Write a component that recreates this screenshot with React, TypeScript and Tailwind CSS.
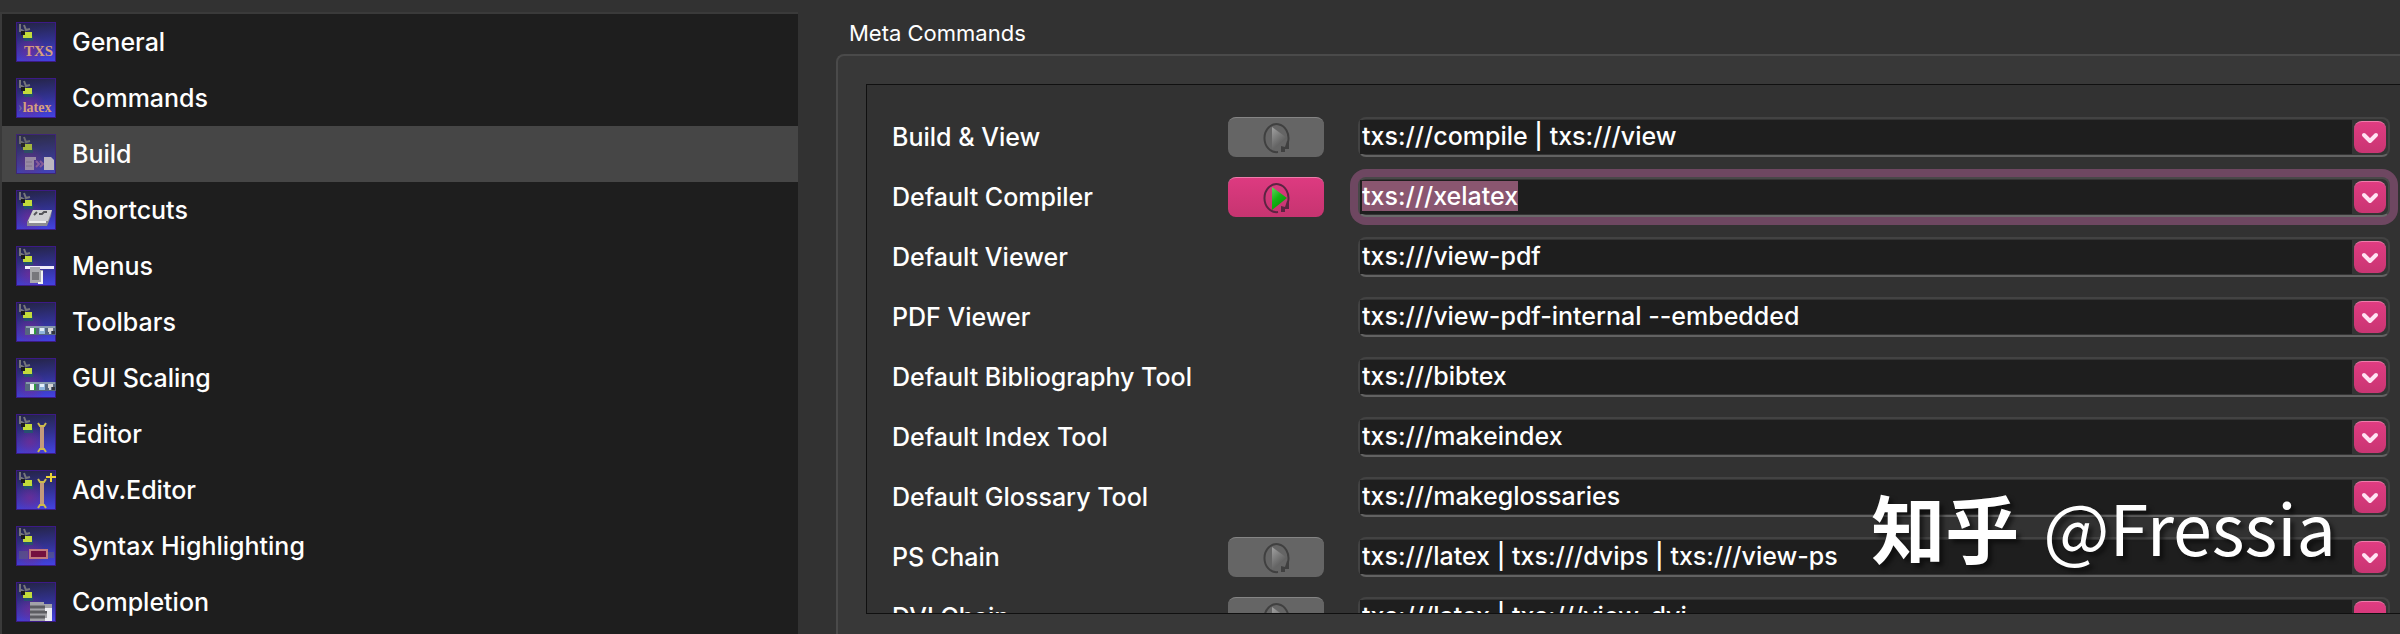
import { useEffect, useRef } from 'react';
import { ChevronDown } from 'lucide-react';

type IconKind =
  | 'general'
  | 'commands'
  | 'build'
  | 'shortcuts'
  | 'menus'
  | 'toolbars'
  | 'editor'
  | 'advEditor'
  | 'syntax'
  | 'completion';

interface Page {
  label: string;
  icon: IconKind;
}

interface Command {
  id: string;
  label: string;
  value: string;
  run?: 'idle' | 'active';
  focused?: boolean;
}

const PAGES: Page[] = [
  { label: 'General', icon: 'general' },
  { label: 'Commands', icon: 'commands' },
  { label: 'Build', icon: 'build' },
  { label: 'Shortcuts', icon: 'shortcuts' },
  { label: 'Menus', icon: 'menus' },
  { label: 'Toolbars', icon: 'toolbars' },
  { label: 'GUI Scaling', icon: 'toolbars' },
  { label: 'Editor', icon: 'editor' },
  { label: 'Adv.Editor', icon: 'advEditor' },
  { label: 'Syntax Highlighting', icon: 'syntax' },
  { label: 'Completion', icon: 'completion' },
];

const COMMANDS: Command[] = [
  { id: 'quick', label: 'Build & View', value: 'txs:///compile | txs:///view', run: 'idle' },
  { id: 'compile', label: 'Default Compiler', value: 'txs:///xelatex', run: 'active', focused: true },
  { id: 'view', label: 'Default Viewer', value: 'txs:///view-pdf' },
  { id: 'view-pdf', label: 'PDF Viewer', value: 'txs:///view-pdf-internal --embedded' },
  { id: 'bibliography', label: 'Default Bibliography Tool', value: 'txs:///bibtex' },
  { id: 'index', label: 'Default Index Tool', value: 'txs:///makeindex' },
  { id: 'glossary', label: 'Default Glossary Tool', value: 'txs:///makeglossaries' },
  { id: 'ps-chain', label: 'PS Chain', value: 'txs:///latex | txs:///dvips | txs:///view-ps', run: 'idle' },
  { id: 'dvi-chain', label: 'DVI Chain', value: 'txs:///latex | txs:///view-dvi', run: 'idle' },
];

function IconDetail({ kind }: { kind: IconKind }) {
  switch (kind) {
    case 'general':
      return (
        <text x="8" y="34" fontSize="15" fontWeight="bold" fontFamily="Liberation Serif, serif" fill="#d6a07c">
          TXS
        </text>
      );
    case 'commands':
      return (
        <text x="2" y="34" fontSize="14" fontWeight="bold" fontFamily="Liberation Serif, serif" fill="#d6a07c">
          <tspan fill="#6a6aa0">›</tspan>latex
        </text>
      );
    case 'build':
      return (
        <>
          <path d="M9 23h11v3h-2v10H9z" fill="#b5a3c4" />
          <path d="M10 28h6M10 32h6" stroke="#93809f" strokeWidth="1" />
          <path d="M20 27l3 3-3 3M24 27l3 3-3 3" stroke="#9d62b4" strokeWidth="2" fill="none" />
          <path d="M28 23h7l3 3v10H28z" fill="#e4dcea" />
        </>
      );
    case 'shortcuts':
      return (
        <>
          <path d="M17 20h19l-1 6-4 10H11v-4z" fill="#8c8c92" />
          <path d="M17 20h19l-4 11H12z" fill="#cfcfd2" />
          <path d="M18 25l3-3M23 24h3l2-2h3" stroke="#55555a" strokeWidth="2" fill="none" />
          <path d="M13 32h17" stroke="#f0f0f0" strokeWidth="2" />
        </>
      );
    case 'menus':
      return (
        <>
          <rect x="9" y="20" width="29" height="3" fill="#f0ecfa" />
          <rect x="14" y="21" width="10" height="3" fill="#aaaab2" />
          <rect x="14" y="24" width="13" height="13" fill="#a9a9ae" />
          <rect x="16" y="26" width="7" height="8" fill="#77777c" />
          <path d="M26 25v12h-4" stroke="#f2f2f2" strokeWidth="2" fill="none" />
        </>
      );
    case 'toolbars':
      return (
        <>
          <rect x="9" y="24" width="31" height="9" fill="#56667f" />
          <path d="M10 24h29v2H10z" fill="#8799ad" />
          <path d="M14 26h4v6h-4z" fill="#f4f4fa" />
          <path d="M18 26h2v6h-2z" fill="#2e9a3e" />
          <rect x="23" y="26" width="6" height="6" fill="#8fb4dc" />
          <rect x="24" y="26" width="4" height="3" fill="#e2edf8" />
          <path d="M32 26h5v3h-2v3h-2v-2h-1z" fill="#d5d5d5" />
          <path d="M36 29h3v3h-3z" fill="#33343c" />
        </>
      );
    case 'editor':
    case 'advEditor':
      return (
        <>
          <path d="M24 12h4v24h-4z" fill="#c39a7c" />
          <path d="M22 9l2 3h4l2-3M22 38l2-3h4l2 3" stroke="#cdbb4c" strokeWidth="2" fill="none" />
          {kind === 'advEditor' && <path d="M35 3v9M30 7h10" stroke="#ecd436" strokeWidth="2" />}
        </>
      );
    case 'syntax':
      return (
        <>
          <path d="M3 25h9v8H3zM32 26h6v6h-6z" fill="#5c5c80" opacity="0.6" />
          <rect x="14" y="24" width="17" height="8" fill="#74103f" stroke="#c0787c" strokeWidth="2" />
        </>
      );
    case 'completion':
      return (
        <>
          <path d="M14 20h14v2h8v17H14z" fill="#a2a2a8" />
          <path d="M14 25h15M14 30h17M14 35h15" stroke="#5c5c62" strokeWidth="3" />
          <path d="M29 26h7v13h-7v-3h2v-7h-2z" fill="#ececf2" />
        </>
      );
  }
}

function PageIcon({ kind, selected }: { kind: IconKind; selected: boolean }) {
  return (
    <svg viewBox="0 0 40 40" className={selected ? 'size-10 shrink-0 opacity-75' : 'size-10 shrink-0'} aria-hidden="true">
      <defs>
        <linearGradient id={`base-${kind}`} x1="0.6" y1="0" x2="0.7" y2="1">
          <stop offset="0" stopColor="#25254a" />
          <stop offset="0.5" stopColor="#323292" />
          <stop offset="1" stopColor="#4343e2" />
        </linearGradient>
        <radialGradient id={`glow-${kind}`} cx="0.35" cy="0.7" r="0.4">
          <stop offset="0" stopColor="#7a2a90" stopOpacity="0.7" />
          <stop offset="1" stopColor="#7a2a90" stopOpacity="0" />
        </radialGradient>
      </defs>
      <rect width="40" height="40" fill={`url(#base-${kind})`} />
      <rect width="40" height="40" fill={`url(#glow-${kind})`} />
      <rect x="0.5" y="0.5" width="39" height="39" fill="none" stroke="#3c1a86" />
      <path d="M8 14h9v5H8z" fill="#1f5a6a" opacity="0.8" />
      <path d="M4 2v8M4 7l5 3M8 3l2 5 4-1" stroke="#76767a" strokeWidth="2" fill="none" />
      <path d="M5 9h4v4H5z" fill="#1c1c20" />
      <path d="M9 10h7v6H7v-3h2z" fill="#c3dc3a" />
      <IconDetail kind={kind} />
    </svg>
  );
}

function RunIcon({ active }: { active: boolean }) {
  const ring = active ? '#5c2542' : '#404040';
  return (
    <svg viewBox="0 0 32 32" className="size-8" aria-hidden="true">
      <defs>
        <linearGradient id={active ? 'run-on' : 'run-off'} x1="0" y1="0" x2="0.6" y2="1">
          <stop offset="0" stopColor={active ? '#5fd45f' : '#a2a2a2'} />
          <stop offset="0.5" stopColor={active ? '#14b414' : '#787878'} />
          <stop offset="1" stopColor={active ? '#079007' : '#505050'} />
        </linearGradient>
      </defs>
      <path d="M18 30A12 14 0 1 1 28 20" fill="none" stroke={ring} strokeWidth="2" />
      <path d="M12 5v23l15-12z" fill={active ? 'url(#run-on)' : 'url(#run-off)'} />
      <path d="M21 30v-6l4 1 2-6h2v8h-4v3z" fill={ring} />
    </svg>
  );
}

function Sidebar() {
  return (
    <nav className="mt-3 flex w-[33.25%] shrink-0 flex-col overflow-hidden border-2 border-r-0 border-b-0 border-[#3a3a3a] bg-[#1e1e1e]">
      {PAGES.map((page) => {
        const selected = page.label === 'Build';
        return (
          <a
            key={page.label}
            href="#"
            aria-current={selected ? 'page' : undefined}
            className={
              selected
                ? 'flex h-14 shrink-0 items-center gap-4 bg-[#464646] pl-[14px]'
                : 'flex h-14 shrink-0 items-center gap-4 pl-[14px]'
            }
          >
            <PageIcon kind={page.icon} selected={selected} />
            <span className="text-[25px] leading-8 font-medium">{page.label}</span>
          </a>
        );
      })}
    </nav>
  );
}

function ComboBox({ id, value, focused }: { id: string; value: string; focused?: boolean }) {
  const inputRef = useRef<HTMLInputElement>(null);

  useEffect(() => {
    if (focused) {
      inputRef.current?.focus();
      inputRef.current?.select();
    }
  }, [focused]);

  return (
    <div
      className={
        focused
          ? 'flex h-10 min-w-0 flex-1 items-center rounded-lg border-2 border-[#484848] border-b-[#6a6a6a] bg-[#343434] pr-0.5 ring-8 ring-[#6e4761]'
          : 'flex h-10 min-w-0 flex-1 items-center rounded-lg border-2 border-[#434343] border-b-[#626262] bg-[#343434] pr-0.5'
      }
    >
      <input
        ref={inputRef}
        id={id}
        type="text"
        defaultValue={value}
        className="h-[34px] min-w-0 flex-1 bg-[#1e1e1e] pb-0.5 pl-0.5 text-[25px] leading-8 font-medium outline-none selection:bg-[#8a5670] selection:text-white"
      />
      <button
        type="button"
        aria-label="Show options"
        className="ml-0.5 flex size-8 items-center justify-center rounded-lg border-t border-[#ee7cab] bg-linear-to-b from-[#e03c82] to-[#c93572]"
      >
        <ChevronDown className="size-6 text-[#ffe3f2]" strokeWidth={4} />
      </button>
    </div>
  );
}

function CommandRow({ command }: { command: Command }) {
  return (
    <div className="flex h-10 shrink-0 items-center">
      <label htmlFor={command.id} className="w-[336px] shrink-0 text-[25px] leading-8 font-medium">
        {command.label}
      </label>
      <div className="mr-[34px] w-24 shrink-0">
        {command.run && (
          <button
            type="button"
            aria-label={`Run ${command.label}`}
            className={
              command.run === 'active'
                ? 'flex h-10 w-full items-center justify-center rounded-lg border-t border-[#ee7cab] bg-linear-to-b from-[#dd3a80] to-[#c63470]'
                : 'flex h-10 w-full items-center justify-center rounded-lg border-t border-[#858585] bg-[#656565]'
            }
          >
            <RunIcon active={command.run === 'active'} />
          </button>
        )}
      </div>
      <ComboBox id={command.id} value={command.value} focused={command.focused} />
    </div>
  );
}

export default function App() {
  return (
    <div className="relative flex h-screen overflow-hidden bg-[#323232] font-[Inter,sans-serif] text-white">
      <Sidebar />

      <main className="ml-[38px] flex min-w-0 flex-1 flex-col">
        <h1 className="mt-5 mb-2 ml-[13px] text-[22px] leading-[26px]">Meta Commands</h1>
        <section className="flex min-h-0 flex-1 flex-col rounded-tl-lg border-t-2 border-l-2 border-[#4a4a4a] bg-[#383838] pt-7 pb-5 pl-7">
          <div className="flex min-h-0 flex-1 flex-col gap-5 overflow-hidden border border-r-0 border-[#101010] bg-[#323232] pt-8 pr-[10px] pl-[25px]">
            {COMMANDS.map((command) => (
              <CommandRow key={command.id} command={command} />
            ))}
          </div>
        </section>
      </main>

      {/* Watermark */}
      <p className="pointer-events-none absolute right-16 bottom-14 flex items-center gap-6 font-['Noto_Sans_CJK_SC',sans-serif] leading-[104px] [text-shadow:4px_4px_4px_#00000080]">
        <span className="text-[74px] font-bold">知乎</span>
        <span className="text-[70px]">@Fressia</span>
      </p>
    </div>
  );
}
